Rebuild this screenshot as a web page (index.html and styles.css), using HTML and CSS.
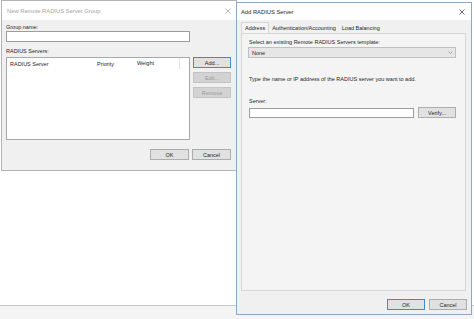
FILE: index.html
```html
<!DOCTYPE html>
<html lang="en">
<head>
  <meta charset="UTF-8" />
  <title>Add RADIUS Server</title>
  <link rel="stylesheet" href="styles.css">
</head>
<body>
  <div class="desktop">
    <div class="backdrop-edge"></div>

    <!-- group dialog, sitting behind -->
    <div class="window group-window">
      <div class="titlebar inactive">
        <span>New Remote RADIUS Server Group</span>
        <svg class="close" width="6" height="6" viewBox="0 0 6 6"><path d="M0.5 0.5L5.5 5.5M5.5 0.5L0.5 5.5" stroke="#a8a8a8" stroke-width="0.8"/></svg>
      </div>
      <div class="dialog-body">
        <div class="field-label">Group name:</div>
        <div class="textbox group-name"></div>
        <div class="field-label spaced">RADIUS Servers:</div>
        <div class="list-row">
          <div class="listview">
            <div class="list-header">
              <span class="col-server">RADIUS Server</span>
              <span class="col-priority">Priority</span>
              <span class="col-weight">Weight</span>
            </div>
          </div>
          <div class="side-buttons">
            <button class="btn default">Add...</button>
            <button class="btn" disabled>Edit...</button>
            <button class="btn" disabled>Remove</button>
          </div>
        </div>
        <div class="footer">
          <button class="btn">OK</button>
          <button class="btn">Cancel</button>
        </div>
      </div>
    </div>

    <!-- active dialog -->
    <div class="window server-window">
      <div class="titlebar">
        <span>Add RADIUS Server</span>
        <svg class="close" width="6" height="6" viewBox="0 0 6 6"><path d="M0.5 0.5L5.5 5.5M5.5 0.5L0.5 5.5" stroke="#444" stroke-width="0.8"/></svg>
      </div>
      <div class="tabs">
        <span class="tab selected">Address</span>
        <span class="tab">Authentication/Accounting</span>
        <span class="tab">Load Balancing</span>
      </div>
      <div class="tab-page">
        <div class="field-label">Select an existing Remote RADIUS Servers template:</div>
        <div class="dropdown">
          <span>None</span>
          <svg width="5" height="3" viewBox="0 0 5 3"><path d="M0.5 0.5L2.5 2.5L4.5 0.5" fill="none" stroke="#8a8a8a" stroke-width="0.7"/></svg>
        </div>
        <div class="field-label hint">Type the name or IP address of the RADIUS server you want to add.</div>
        <div class="field-label server-label">Server:</div>
        <div class="server-row">
          <div class="textbox server-name"></div>
          <button class="btn">Verify...</button>
        </div>
      </div>
      <div class="footer">
        <button class="btn default">OK</button>
        <button class="btn">Cancel</button>
      </div>
    </div>
  </div>
</body>
</html>
```

FILE: styles.css
```css
body {
  margin: 0;
  font-family: 'Liberation Sans', Arial, sans-serif;
  font-size: 5.5px;
  color: #262626;
  background: #ffffff;
}

.desktop {
  position: relative;
  width: 474px;
  height: 319px;
  overflow: hidden;
}

.backdrop-edge {
  position: absolute;
  left: 0;
  right: 0;
  top: 305px;
  bottom: 0;
  border-top: 1px solid #c6c6c6;
  background: #f4f4f4;
}

.window {
  position: absolute;
  box-sizing: border-box;
  display: flex;
  flex-direction: column;
  background: #f0f0f0;
}

.group-window {
  left: 1px;
  top: 0;
  width: 236px;
  height: 171px;
  border: 1px solid #b4b4b4;
}

.server-window {
  left: 236px;
  top: 2px;
  width: 236px;
  height: 313px;
  border: 1px solid #8fa8c2;
}

.titlebar {
  display: flex;
  align-items: center;
  justify-content: space-between;
  height: 19px;
  padding: 0 5px 0 5px;
  background: #ffffff;
  font-size: 5.8px;
  color: #1e1e1e;
}

.titlebar.inactive {
  color: #a3a3a3;
}

.server-window .titlebar {
  height: 17px;
  padding: 0 6px 0 4px;
}

.dialog-body {
  padding: 4px 5px 0 4px;
}

.field-label {
  height: 7px;
  line-height: 7px;
  white-space: nowrap;
}

.field-label.spaced {
  margin-top: 6px;
}

.textbox {
  box-sizing: border-box;
  height: 11px;
  background: #ffffff;
  border: 1px solid #9c9c9c;
}

.group-name {
  width: 184px;
}

.list-row {
  display: flex;
  margin-top: 2px;
}

.listview {
  box-sizing: border-box;
  width: 184px;
  height: 83px;
  background: #ffffff;
  border: 1px solid #a8a8a8;
}

.list-header {
  display: flex;
  align-items: center;
  height: 11px;
  padding-left: 3px;
}

.col-server { width: 87px; }
.col-priority { width: 40px; }
.col-weight {
  width: 42px;
  height: 11px;
  line-height: 11px;
  border-right: 1px solid #e3e3e3;
}

.side-buttons {
  display: flex;
  flex-direction: column;
  gap: 4px;
  margin-left: 3px;
}

.btn {
  box-sizing: border-box;
  width: 38px;
  height: 11px;
  padding: 0;
  font-family: inherit;
  font-size: 5.5px;
  color: #262626;
  background: #e1e1e1;
  border: 1px solid #adadad;
}

.btn.default {
  border-color: #3d8bd8;
}

.btn:disabled {
  color: #9a9a9a;
  background: #d3d3d3;
  border-color: #c4c4c4;
}

.footer {
  display: flex;
  justify-content: flex-end;
  gap: 3px;
  margin-top: 9px;
}

.group-window .footer .btn {
  width: 39px;
}

.tabs {
  display: flex;
  height: 11px;
  margin: 2px 0 0 4px;
}

.tab {
  display: flex;
  align-items: center;
  padding: 0 2px;
  border: 1px solid transparent;
  border-bottom: none;
}

.tab.selected {
  padding: 0 3px;
  background: #f4f4f4;
  border-color: #d6d6d6;
}

.tab-page {
  box-sizing: border-box;
  height: 258px;
  margin: 0 5px 0 4px;
  padding: 5px 9px 0 7px;
  background: #f4f4f4;
  border: 1px solid #d6d6d6;
}

.dropdown {
  box-sizing: border-box;
  display: flex;
  align-items: center;
  justify-content: space-between;
  height: 11px;
  margin: 1px 0 0 -1px;
  padding: 0 2px 0 3px;
  background: #e6e6e6;
  border: 1px solid #c0c0c0;
}

.hint {
  margin-top: 18px;
}

.server-label {
  margin-top: 15px;
}

.server-row {
  display: flex;
  align-items: center;
  gap: 4px;
  margin-top: 2px;
}

.server-name {
  width: 165px;
  height: 10px;
}

.server-window .footer {
  gap: 4px;
  margin-top: 8px;
  padding-right: 4px;
}
```
